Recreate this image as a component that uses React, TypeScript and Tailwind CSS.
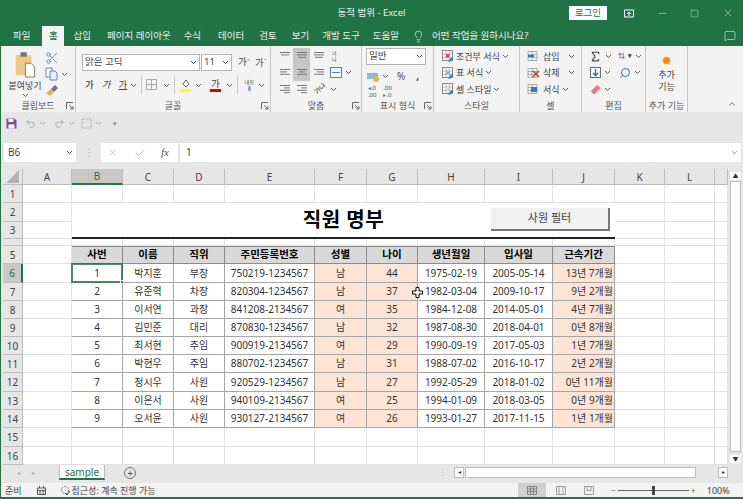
import React from 'react';
import { Lightbulb, MessageSquare, Scissors, Search, Sigma, X, Check, Undo2, Redo2, ChevronUp, Minus, Square, ChevronDown } from 'lucide-react';

const font = "font-['Noto_Sans','Noto_Sans_CJK_KR',sans-serif]";

const Chev = ({ className = '' }: { className?: string }) => (
  <svg width="7" height="5" viewBox="0 0 7 5" className={`shrink-0 ${className}`}>
    <path d="M1 1l2.5 2.5L6 1" fill="none" stroke="#555" strokeWidth="1" />
  </svg>
);

const Launcher = () => (
  <svg width="8" height="8" viewBox="0 0 8 8" className="shrink-0">
    <path d="M.5 7V.5H7M3 3l4 4M7 4v3H4" fill="none" stroke="#666" strokeWidth="1" />
  </svg>
);

const Icon = ({ children, w = 14, h = 14 }: { children: React.ReactNode; w?: number; h?: number }) => (
  <svg width={w} height={h} viewBox={`0 0 ${w} ${h}`} className="shrink-0">{children}</svg>
);

const Lines = ({ rows }: { rows: number[][] }) => (
  <Icon w={12} h={10}>
    {rows.map(([x1, x2], i) => (
      <path key={i} d={`M${x1} ${1.5 + i * 2.4}H${x2}`} stroke="#777" strokeWidth="1" />
    ))}
  </Icon>
);

const Group = ({ width, label, launcher, children }: { width: number; label: string; launcher?: boolean; children: React.ReactNode }) => (
  <div className="flex h-full shrink-0 flex-col border-r border-[#c6c6c6]" style={{ width }}>
    <div className="min-h-0 flex-1">{children}</div>
    <div className="relative flex h-[13px] items-center justify-center text-[9px] leading-none text-[#555]">
      {label}
      {launcher && <span className="absolute right-[1px] top-[3px]"><Launcher /></span>}
    </div>
  </div>
);

const StyleRow = ({ icon, text, chev = true }: { icon: React.ReactNode; text: string; chev?: boolean }) => (
  <div className="flex h-[16.5px] items-center gap-[2px] whitespace-nowrap text-[9px] text-[#444]">
    {icon}
    <span>{text}</span>
    {chev && <Chev />}
  </div>
);

const TableIcon = ({ accent }: { accent: string }) => (
  <Icon w={12} h={12}>
    <rect x=".5" y=".5" width="10" height="10" fill="#fff" stroke="#888" />
    <path d="M.5 4H10.5M.5 7.5H10.5M4 .5V10.5M7.5 .5V10.5" stroke="#aaa" strokeWidth=".8" />
    <rect x="4" y="4" width="3.5" height="3.5" fill={accent} />
    <path d="M6 11l4-4 1.5 1.5-4 3.5z" fill="#2b7cd3" />
  </Icon>
);

const CellIcon = ({ mark }: { mark: React.ReactNode }) => (
  <Icon w={14} h={12}>
    <path d="M1 1.5H10M1 4.5H10M1 7.5H10M1 10.5H10M1 1.5V10.5M5 1.5V10.5M10 1.5V10.5" stroke="#999" strokeWidth=".8" fill="none" />
    {mark}
  </Icon>
);

const Ribbon = () => (
  <div className="flex h-[66px] shrink-0 bg-[#f3f3f3] text-[#444]">
    <Group width={75} label="클립보드" launcher>
      <div className="flex h-full pl-[6px] pt-[5px]">
        <div className="flex w-[36px] flex-col items-center">
          <svg width="22" height="29" viewBox="0 0 24 29" className="shrink-0">
            <rect x="2" y="3" width="17" height="22" rx="1" fill="#f0c987" />
            <rect x="7" y="0" width="7" height="5" rx="1" fill="#777" />
            <path d="M12.500 12h6l4 4v11h-10z" fill="#fff" stroke="#777" />
          </svg>
          <span className="whitespace-nowrap text-[9px] leading-[11px]">붙여넣기</span>
          <Chev className="mt-[2px]" />
        </div>
        <div className="ml-[2px] flex flex-col gap-[2px] pt-[0px]">
          <Scissors size={14} strokeWidth={1.2} color="#3f6fa8" />
          <div className="flex items-center gap-[3px]">
            <Icon w={13} h={14}>
              <path d="M1 1h6v9H1z" fill="#fff" stroke="#6b87a8" />
              <path d="M5 4h5l2 2v7H5z" fill="#e8eef5" stroke="#6b87a8" />
            </Icon>
            <Chev />
          </div>
          <Icon w={14} h={14}>
            <path d="M6 6l4-4 3 3-4 4z" fill="#777" />
            <path d="M1 10l5-4 3 3-4 4z" fill="#e4b25c" />
          </Icon>
        </div>
      </div>
    </Group>

    <Group width={195} label="글꼴" launcher>
      <div className="flex flex-col pl-[6px] pt-[8px]">
        <div className="flex h-[17px] items-center">
          <div className="flex h-[17px] w-[118px] items-center justify-between border border-[#b5b5b5] bg-white px-[2px] text-[9.5px]">
            맑은 고딕<Chev />
          </div>
          <div className="ml-[1px] flex h-[17px] w-[31px] items-center justify-between border border-[#b5b5b5] bg-white px-[2px] text-[9.5px]">
            11<Chev />
          </div>
          <span className="ml-[6px] text-[9.5px]">가<sup className="text-[6px] text-[#2b7cd3]">^</sup></span>
          <span className="ml-[5px] text-[9px]">가<sup className="text-[6px] text-[#2b7cd3]">ˇ</sup></span>
        </div>
        <div className="mt-[4px] flex h-[20px] items-center text-[9.5px]">
          <span className="ml-[3px] font-medium">가</span>
          <span className="ml-[8px] italic">가</span>
          <span className="ml-[8px] underline">가</span>
          <Chev className="ml-[3px]" />
          <span className="ml-[4px] h-[18px] w-px bg-[#c6c6c6]" />
          <svg width="12" height="12" viewBox="0 0 12 12" className="ml-[4px] shrink-0">
            <path d="M.5.5h10v10H.5zM5.500.5v10M.5 5.500h10" fill="none" stroke="#aaa" />
          </svg>
          <Chev className="ml-[5px]" />
          <span className="ml-[4px] h-[18px] w-px bg-[#c6c6c6]" />
          <svg width="12" height="14" viewBox="0 0 12 14" className="ml-[5px] shrink-0">
            <path d="M3 6l3-4 3 4-3 3z" fill="#fff" stroke="#666" />
            <rect x="0" y="11" width="11" height="3" fill="#ffff00" />
          </svg>
          <Chev className="ml-[3px]" />
          <span className="ml-[7px] flex w-[12px] flex-col items-center leading-[10px]">
            <span>가</span>
            <span className="h-[3px] w-[11px] bg-[#e00000]" />
          </span>
          <Chev className="ml-[5px]" />
          <span className="ml-[4px] h-[18px] w-px bg-[#c6c6c6]" />
          <span className="ml-[5px] flex w-[12px] flex-col items-center text-[5px] leading-[6px]">
            <span>내천</span>
            <span className="font-bold text-[#2b6cb0]">ㅐ</span>
          </span>
          <Chev className="ml-[3px]" />
        </div>
      </div>
    </Group>

    <Group width={91} label="맞춤" launcher>
      <div className="grid grid-cols-[17px_17px_17px_32px] grid-rows-[16.5px_16.5px_16px] pl-[5px] pt-[2px]">
        <span className="flex items-center justify-center"><Lines rows={[[1, 11], [2, 10]]} /></span>
        <span className="flex items-center justify-center bg-[#c6c6c6]"><Lines rows={[[1, 11], [1, 11], [2, 10]]} /></span>
        <span className="flex items-center justify-center"><Lines rows={[[1, 11], [1, 11], [2, 10]]} /></span>
        <span className="flex flex-col items-start justify-center pl-[5px] text-[5px] leading-[6px] text-[#555]"><span>가</span><span>나</span></span>
        <span className="flex items-center justify-center"><Lines rows={[[1, 11], [1, 8], [1, 11]]} /></span>
        <span className="flex items-center justify-center bg-[#c6c6c6]"><Lines rows={[[1, 11], [3, 9], [1, 11]]} /></span>
        <span className="flex items-center justify-center"><Lines rows={[[1, 11], [4, 11], [1, 11]]} /></span>
        <span className="flex items-center justify-start gap-[3px] pl-[3px]">
          <Icon w={12} h={11}>
            <rect x=".5" y=".5" width="11" height="10" fill="#fff" stroke="#777" />
            <path d="M2 5.500h8" stroke="#2b7cd3" />
          </Icon>
          <Chev />
        </span>
        <span className="flex items-center justify-center"><Lines rows={[[1, 11], [5, 11], [1, 11], [5, 11]]} /></span>
        <span className="flex items-center justify-center"><Lines rows={[[1, 11], [5, 11], [1, 11], [5, 11]]} /></span>
        <span className="col-span-2 flex items-center justify-start gap-[3px] pl-[4px] text-[7px]">
          <span className="-rotate-45">가나</span>
          <Chev />
        </span>
      </div>
    </Group>

    <Group width={72} label="표시 형식" launcher>
      <div className="flex flex-col pl-[4px] pt-[2px]">
        <div className="flex h-[17px] w-[60px] items-center justify-between border border-[#b5b5b5] bg-white px-[2px] text-[9.5px]">
          일반<Chev />
        </div>
        <div className="mt-[5px] flex h-[12px] items-center">
          <Icon w={14} h={11}>
            <rect x="1" y="2" width="11" height="6" fill="#8fb8de" />
            <circle cx="10" cy="8" r="3" fill="#e4b25c" />
          </Icon>
          <Chev className="ml-[2px]" />
          <span className="ml-[8px] text-[10px] text-[#555]">%</span>
          <span className="ml-[11px] text-[10px] font-bold leading-none">,</span>
        </div>
        <div className="mt-[3px] flex h-[14px] items-center gap-[7px] pl-[2px] text-[6px] leading-[7px]">
          <span className="flex h-[14px] flex-col"><span><span className="text-[#2b7cd3]">◂</span>.0</span><span>.00</span></span>
          <span className="flex h-[14px] flex-col"><span>.00</span><span><span className="text-[#2b7cd3]">▸</span>.0</span></span>
        </div>
      </div>
    </Group>

    <Group width={86} label="스타일">
      <div className="flex flex-col pl-[8px] pt-[2px]">
        <StyleRow icon={<TableIcon accent="#d0574c" />} text="조건부 서식" />
        <StyleRow icon={<TableIcon accent="#8fb8de" />} text="표 서식" />
        <StyleRow icon={<TableIcon accent="#d9d9d9" />} text="셀 스타일" />
      </div>
    </Group>

    <Group width={62} label="셀">
      <div className="flex flex-col pl-[7px] pt-[2px]">
        <div className="flex items-center justify-between pr-[6px]"><StyleRow icon={<CellIcon mark={<path d="M1 6h6" stroke="#2b7cd3" strokeWidth="2" />} />} text="삽입" chev={false} /><Chev /></div>
        <div className="flex items-center justify-between pr-[6px]"><StyleRow icon={<CellIcon mark={<path d="M6 4l6 6M12 4l-6 6" stroke="#d0392b" strokeWidth="1.500" />} />} text="삭제" chev={false} /><Chev /></div>
        <div className="flex items-center justify-start gap-[2px]"><StyleRow icon={<CellIcon mark={<rect x="4" y="4" width="6" height="5" fill="#2b7cd3" />} />} text="서식" chev={false} /><Chev /></div>
      </div>
    </Group>

    <Group width={64} label="편집">
      <div className="grid grid-cols-[31px_28px] grid-rows-[16.5px_16.5px_16.5px] pl-[3px] pt-[2px]">
        <span className="flex items-center justify-center gap-[3px]"><Sigma size={13} color="#444" /><Chev /></span>
        <span className="flex items-center justify-center gap-[3px] text-[7px]"><span className="font-bold text-[#7a4fa3]">⇅</span><span className="font-bold">▾</span><Chev /></span>
        <span className="flex items-center justify-center gap-[2px]">
          <Icon w={12} h={12}>
            <rect x=".5" y=".5" width="10" height="10" fill="#fff" stroke="#666" />
            <path d="M5.500 2v6M3 6l2.500 2.500L8 6" fill="none" stroke="#2b6cb0" strokeWidth="1.300" />
          </Icon>
          <Chev />
        </span>
        <span className="flex items-center justify-center gap-[3px]"><Search size={12} color="#2b6cb0" strokeWidth={2} className="-scale-x-100" /><Chev /></span>
        <span className="flex items-center justify-center gap-[2px]">
          <Icon w={12} h={12}><path d="M1 8l6-6 4 3-6 6H3z" fill="#e87a8e" /></Icon>
          <Chev />
        </span>
      </div>
    </Group>

    <Group width={42} label="추가 기능">
      <div className="flex h-full flex-col items-center pt-[11px] text-[9px] leading-[12px]">
        <span className="mb-[5px] size-[7px] rounded-full bg-[#ff8c00] shadow-[0_0_2px_#ffb347]" />
        <span>추가</span>
        <span>기능</span>
      </div>
    </Group>

    <div className="flex flex-1 items-end justify-end pb-[3px] pr-[6px]">
      <ChevronUp size={10} color="#555" />
    </div>
  </div>
);

const QuickBar = () => (
  <div className="flex h-[23px] shrink-0 items-center bg-[#e6e6e6] pl-[5px]">
    <svg width="11" height="11" viewBox="0 0 11 11" className="shrink-0">
      <path d="M.5.5h8l2 2v8H.5z" fill="#7a4fa3" />
      <rect x="2.500" y="1" width="5" height="3" fill="#fff" />
      <rect x="2.500" y="6.500" width="6" height="4" fill="#fff" />
    </svg>
    <Undo2 size={11} color="#aaa" className="ml-[8px]" strokeWidth={2} />
    <Chev className="ml-[3px] opacity-40" />
    <Redo2 size={11} color="#aaa" className="ml-[8px]" strokeWidth={2} />
    <Chev className="ml-[3px] opacity-40" />
    <svg width="11" height="11" viewBox="0 0 11 11" className="ml-[6px] shrink-0">
      <path d="M1 1h9v9H1z" fill="none" stroke="#aaa" strokeDasharray="1.500 1" />
    </svg>
    <Chev className="ml-[3px] opacity-40" />
    <span className="ml-[11px] text-[7px] leading-none text-[#888]">▾</span>
  </div>
);

const FormulaBar = () => (
  <div className="flex h-[34px] shrink-0 items-start bg-[#e6e6e6] pl-[3px] pr-[2px] pt-[8px]">
    <div className="flex h-[19px] w-[72px] items-center justify-between bg-white pl-[4px] pr-[3px] text-[10px] text-[#444]">
      B6<Chev />
    </div>
    <span className="ml-[8px] mt-[3px] text-[10px] leading-[12px] text-[#aaa]">⋮</span>
    <div className="ml-[7px] flex h-[19px] w-[77px] items-center justify-between bg-white pl-[6px] pr-[9px] text-[#aaa]">
      <X size={11} strokeWidth={1.3} />
      <Check size={12} strokeWidth={1.5} />
      <i className="font-['Liberation_Serif',serif] text-[11px] text-[#555]">fx</i>
    </div>
    <div className="ml-[2px] flex h-[19px] flex-1 items-center justify-between bg-white pl-[6px] pr-[2px] text-[10px] text-[#444]">
      1<ChevronDown size={9} color="#777" />
    </div>
  </div>
);

const columns = ['', 'A', 'B', 'C', 'D', 'E', 'F', 'G', 'H', 'I', 'J', 'K', 'L', ''];

const headers = ['사번', '이름', '직위', '주민등록번호', '성별', '나이', '생년월일', '입사일', '근속기간'];

const people = [
  ['1', '박지훈', '부장', '750219-1234567', '남', '44', '1975-02-19', '2005-05-14', '13년 7개월'],
  ['2', '유준혁', '차장', '820304-1234567', '남', '37', '1982-03-04', '2009-10-17', '9년 2개월'],
  ['3', '이서연', '과장', '841208-2134567', '여', '35', '1984-12-08', '2014-05-01', '4년 7개월'],
  ['4', '김민준', '대리', '870830-1234567', '남', '32', '1987-08-30', '2018-04-01', '0년 8개월'],
  ['5', '최서현', '주임', '900919-2134567', '여', '29', '1990-09-19', '2017-05-03', '1년 7개월'],
  ['6', '박현우', '주임', '880702-1234567', '남', '31', '1988-07-02', '2016-10-17', '2년 2개월'],
  ['7', '정시우', '사원', '920529-1234567', '남', '27', '1992-05-29', '2018-01-02', '0년 11개월'],
  ['8', '이은서', '사원', '940109-2134567', '여', '25', '1994-01-09', '2018-03-05', '0년 9개월'],
  ['9', '오서윤', '사원', '930127-2134567', '여', '26', '1993-01-27', '2017-11-15', '1년 1개월'],
];

const RowHead = ({ n, active }: { n: number; active?: boolean }) => (
  <div
    className={`flex items-center justify-center border-b border-r text-[10px] leading-none ${
      active
        ? 'border-b-[#bdbdbd] border-r-2 border-r-[#217346] bg-[#c8c8c8] text-[#217346]'
        : 'border-[#bdbdbd] bg-[#e6e6e6] text-[#444]'
    }`}
  >
    {n === 4 ? '' : n}
  </div>
);

const Blank = ({ count }: { count: number }) => (
  <>
    {Array.from({ length: count }).map((_, i) => (
      <div key={i} className="border-b border-r border-[#e2e2e2] bg-white" />
    ))}
  </>
);

const Sheet = () => (
  <div className="relative grid grid-cols-[20px_49px_51px_51px_51px_90px_52px_51px_67px_68px_62px_50px_50px_13px] grid-rows-[16px_18px_19px_17px_7px_18px_19px_18px_18px_18px_18px_18px_19px_18px_18px_19px_18px] text-[10px] text-[#333]">
    {columns.map((c, i) => (
      <div
        key={i}
        className={`flex items-center justify-center border-r border-[#bdbdbd] text-[10px] leading-none ${
          i === 2 ? 'border-b-2 border-b-[#217346] bg-[#c8c8c8] text-[#217346]' : 'border-b bg-[#e6e6e6] text-[#444]'
        }`}
      >
        {i === 0 ? <svg width="13" height="13" viewBox="0 0 13 13"><path d="M13 0v13H0z" fill="#b4b4b4" /></svg> : c}
      </div>
    ))}

    <RowHead n={1} />
    <Blank count={13} />

    <RowHead n={2} />
    <div className="border-b border-r border-[#e2e2e2] bg-white" />
    <div className="relative col-span-9 row-span-2 flex items-center justify-center border-b-2 border-[#222] bg-white text-[20px] font-bold tracking-[0.5px] text-black">
      직원 명부
      <button className="absolute right-[5px] top-[5px] flex h-[23px] w-[119px] items-center justify-center border-b-2 border-r-2 border-[#777] bg-[#f0f0f0] text-[11px] font-normal tracking-normal text-[#444]">
        사원 필터
      </button>
    </div>
    <Blank count={3} />

    <RowHead n={3} />
    <Blank count={1} />
    <Blank count={3} />

    <RowHead n={4} />
    <Blank count={13} />

    <RowHead n={5} />
    <div className="border-b border-r border-[#e2e2e2] bg-white" />
    {headers.map(h => (
      <div key={h} className="flex items-center justify-center border-b border-r border-t border-[#8c8c8c] bg-[#d9d9d9] text-[10.5px] font-bold text-black">
        {h}
      </div>
    ))}
    <Blank count={3} />

    {people.map((row, r) => (
      <React.Fragment key={r}>
        <RowHead n={r + 6} active={r === 0} />
        <div className="border-b border-r border-[#e2e2e2] bg-white" />
        {row.map((v, c) => (
          <div
            key={c}
            className={`relative flex items-center whitespace-nowrap border-b border-r border-[#a6a6a6] ${
              c === 8 ? 'justify-end pr-[1px]' : 'justify-center'
            } ${c === 4 || c === 5 || c === 8 ? 'bg-[#fce4d6]' : 'bg-white'}`}
          >
            {v}
            {r === 0 && c === 0 && (
              <span className="absolute -inset-px border-2 border-[#217346] opacity-80">
                <span className="absolute -bottom-[3px] -right-[3px] size-[4px] border border-white bg-[#217346]" />
              </span>
            )}
          </div>
        ))}
        <Blank count={3} />
      </React.Fragment>
    ))}

    <RowHead n={15} />
    <Blank count={13} />
    <RowHead n={16} />
    <Blank count={13} />

    <svg width="11" height="11" viewBox="0 0 11 11" className="absolute left-[409px] top-[118px]">
      <path d="M4 .5h3v3.500h3.500v3H7v3.500H4V7H.5V4H4z" fill="#fff" stroke="#000" strokeWidth="1" />
    </svg>
  </div>
);

const VScroll = () => (
  <div className="ml-[2px] flex w-[11px] flex-col items-center bg-[#e6e6e6] pt-[3px] text-[#333]">
    <span className="flex h-[8px] w-full items-center justify-center bg-white text-[6px] leading-none">▲</span>
    <span className="mt-[1px] w-full flex-1 border border-[#bdbdbd] bg-white" />
    <span className="mb-[2px] mt-[3px] flex h-[8px] w-full items-center justify-center bg-white text-[6px] leading-none">▼</span>
  </div>
);

const TabBar = () => (
  <div className="flex h-[18px] shrink-0 items-start bg-[#e6e6e6] text-[#aaa]">
    <span className="ml-[16px] mt-[5px] text-[6px] leading-none">◂</span>
    <span className="ml-[12px] mt-[5px] text-[6px] leading-none">▸</span>
    <div className="ml-[24px] flex h-[15px] w-[46px] items-center justify-center border-b-2 border-l border-r border-[#217346] border-l-[#bdbdbd] border-r-[#bdbdbd] bg-white text-[10px] leading-none text-[#217346]">
      sample
    </div>
    <span className="ml-[19px] mt-[2px] flex size-[12px] items-center justify-center rounded-full border border-[#777] text-[10px] leading-none text-[#555]">+</span>
    <span className="ml-[302px] mt-[3px] text-[9px] leading-none text-[#bbb]">⋮</span>
    <span className="ml-[7px] mt-[2px] flex h-[11px] w-[10px] items-center justify-center border border-[#bdbdbd] bg-white text-[6px] text-[#333]">◂</span>
    <span className="ml-[1px] mt-[2px] h-[11px] w-[231px] border border-[#bdbdbd] bg-white" />
    <span className="ml-[22px] mt-[2px] flex h-[11px] w-[10px] items-center justify-center border border-[#bdbdbd] bg-white text-[6px] text-[#333]">▸</span>
  </div>
);

const StatusBar = () => (
  <div className="flex h-[14px] shrink-0 items-center bg-[#f3f3f3] text-[9px] leading-none text-[#444]">
    <span className="ml-[4px]">준비</span>
    <svg width="9" height="9" viewBox="0 0 9 9" className="ml-[15px] shrink-0">
      <path d="M.5 2h8v6.500h-8zM.5 4.500h8M3 4.500v4M6 4.500v4M2.500 0v2M6.500 0v2" fill="none" stroke="#555" />
    </svg>
    <svg width="11" height="11" viewBox="0 0 11 11" className="ml-[14px] shrink-0">
      <circle cx="5" cy="5" r="3.500" fill="none" stroke="#777" strokeDasharray="2 1" />
      <path d="M5 8l2 2 3-4" fill="none" stroke="#333" />
    </svg>
    <span className="ml-[1px]">접근성: 계속 진행 가능</span>
    <span className="ml-[362px] flex h-[14px] w-[28px] items-center justify-center bg-[#d0d0d0]">
      <svg width="10" height="9" viewBox="0 0 10 9"><path d="M.5.5h9v8h-9zM.5 3h9M.5 5.500h9M3.500.5v8M6.500.5v8" fill="none" stroke="#777" strokeWidth=".8" /></svg>
    </span>
    <svg width="10" height="9" viewBox="0 0 10 9" className="ml-[10px] shrink-0"><path d="M.5.5h9v8h-9zM3 .5v8M7 .5v8" fill="none" stroke="#888" strokeWidth=".8" /></svg>
    <svg width="10" height="9" viewBox="0 0 10 9" className="ml-[18px] shrink-0"><path d="M.5.5h9v8h-9zM3 .5v4h4v-4" fill="none" stroke="#888" strokeWidth=".8" /></svg>
    <span className="ml-[17px] text-[#777]">−</span>
    <div className="relative ml-[2px] h-px w-[71px] bg-[#666]">
      <span className="absolute left-[34px] top-[-4px] h-[9px] w-[3px] bg-[#444]" />
    </div>
    <span className="ml-[2px] text-[#777]">+</span>
    <span className="ml-[11px]">100%</span>
  </div>
);

export default function App() {
  return (
    <div className={`flex h-[499px] w-[743px] flex-col overflow-hidden bg-[#217346] ${font}`}>
      <div className="relative flex h-[26px] shrink-0 items-center justify-center text-[9.5px] text-[#e8f0ea]">
        동적 범위 - Excel
        <div className="absolute right-0 top-0 flex h-[26px] items-center">
          <span className="flex h-[14px] w-[38px] items-center justify-center bg-white text-[9.5px] text-[#217346]">로그인</span>
          <svg width="10" height="9" viewBox="0 0 10 9" className="ml-[17px]">
            <path d="M.5 1h9v7h-9zM5 7V3M3 5l2-2 2 2" fill="none" stroke="#fff" />
          </svg>
          <Minus size={11} color="#fff" strokeWidth={1} className="ml-[23px]" />
          <Square size={9} color="#fff" strokeWidth={1} className="ml-[22px]" />
          <X size={12} color="#fff" strokeWidth={1} className="ml-[23px] mr-[9px]" />
        </div>
      </div>

      <div className="flex h-[20px] shrink-0 items-center text-[9.5px] text-[#e8f0ea]">
        <span className="ml-[13px]">파일</span>
        <span className="ml-[12px] flex h-[20px] w-[22px] items-center justify-center bg-[#f3f3f3] font-medium text-[#217346]">홈</span>
        <span className="ml-[9px]">삽입</span>
        <span className="ml-[16px]">페이지 레이아웃</span>
        <span className="ml-[13px]">수식</span>
        <span className="ml-[17px]">데이터</span>
        <span className="ml-[15px]">검토</span>
        <span className="ml-[15px]">보기</span>
        <span className="ml-[13px]">개발 도구</span>
        <span className="ml-[13px]">도움말</span>
        <Lightbulb size={13} strokeWidth={1.2} className="ml-[13px]" />
        <span className="ml-[7px]">어떤 작업을 원하시나요?</span>
        <MessageSquare size={12} strokeWidth={1.2} className="ml-auto mr-[7px]" />
      </div>

      <div className="ml-[1px] mb-[2px] flex min-h-0 flex-1 flex-col bg-[#f3f3f3]">
        <Ribbon />
        <QuickBar />
        <FormulaBar />
        <div className="flex h-[296px] shrink-0 overflow-hidden bg-[#e6e6e6] pl-[2px] pr-[1px]">
          <Sheet />
          <VScroll />
        </div>
        <TabBar />
        <StatusBar />
      </div>
    </div>
  );
}
